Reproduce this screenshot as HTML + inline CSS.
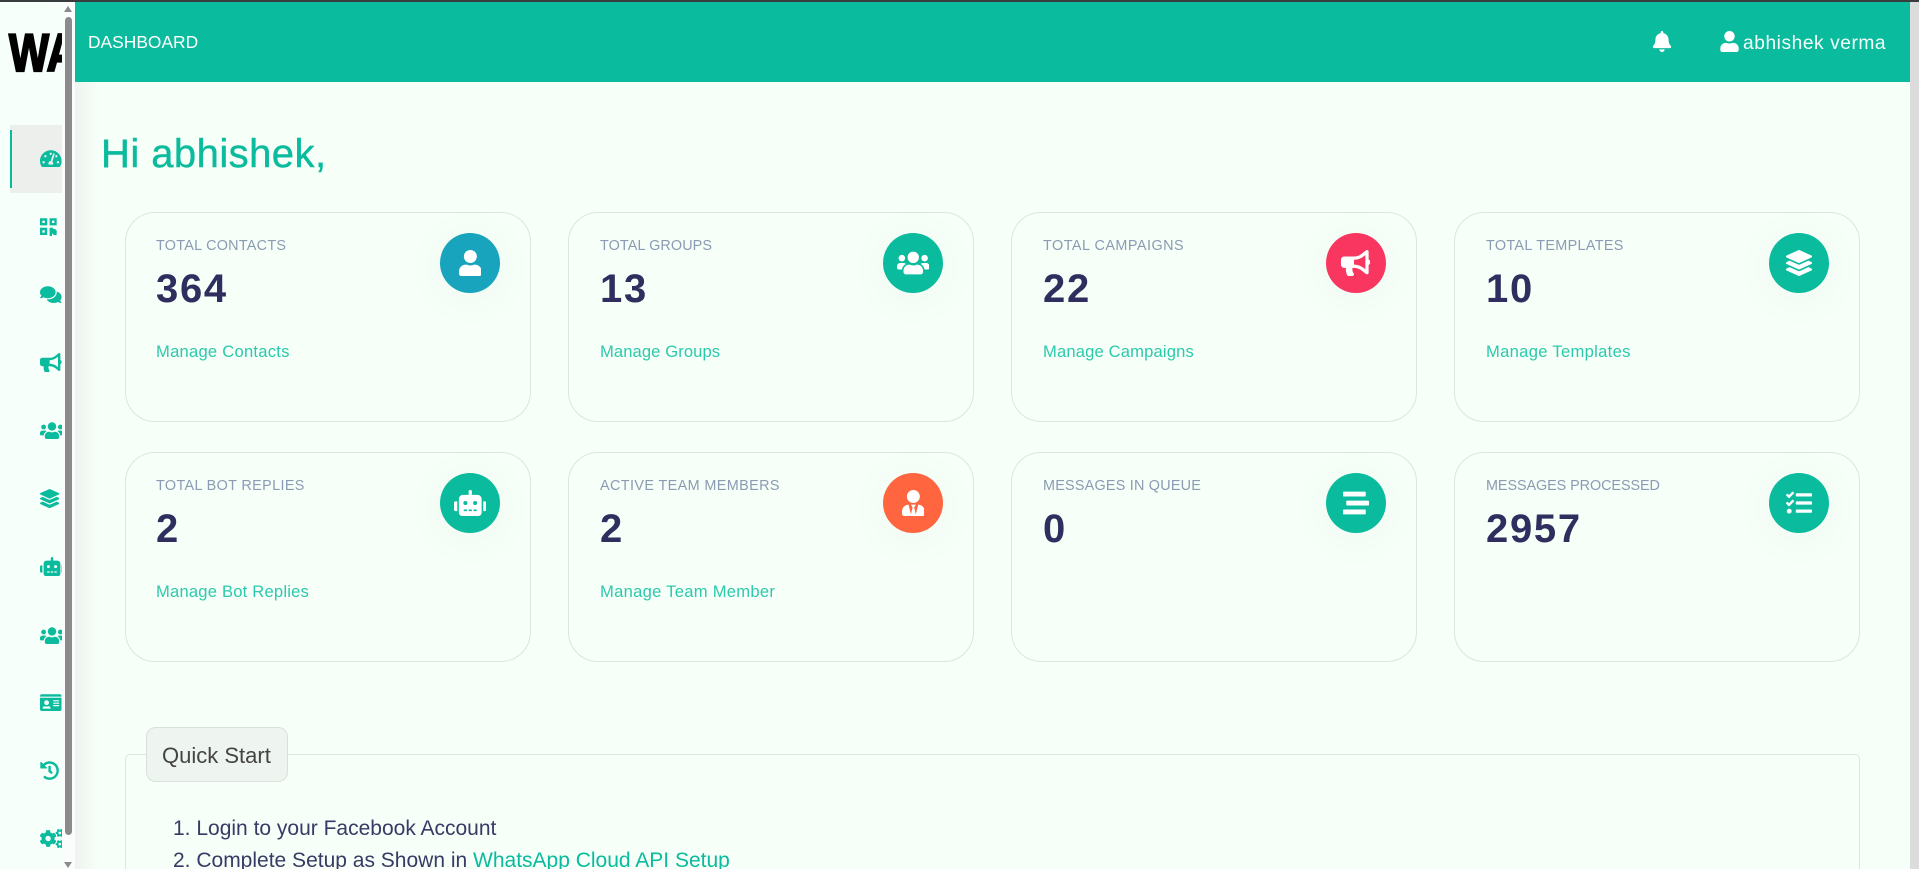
<!DOCTYPE html>
<html lang="en"><head><meta charset="utf-8"><title>Dashboard</title>
<style>
*{box-sizing:border-box;margin:0;padding:0}
html,body{width:1919px;height:869px;overflow:hidden;background:#f6fff8;font-family:"Liberation Sans",sans-serif}
#wrap{position:relative;width:1919px;height:869px;overflow:hidden;background:#f6fff8}
.a{position:absolute;white-space:nowrap;line-height:1}
#top{position:absolute;left:0;top:0;width:1919px;height:2px;background:#3a3d3d;z-index:9}
#side{position:absolute;left:0;top:0;width:75px;height:869px;background:#f6fff9}
#clip{position:absolute;left:0;top:0;width:62px;height:869px;overflow:hidden}
#logo{left:8.5px;top:27px;font-size:53px;font-weight:700;color:#000;-webkit-text-stroke:2.2px #000;transform:scaleX(.8);transform-origin:0 0}
#act{position:absolute;left:10px;top:125px;width:52px;height:68px;background:#ecefec}
#bar{position:absolute;left:10px;top:130px;width:2px;height:58px;background:#0bbb9d}
#thumb{position:absolute;left:65px;top:17px;width:7px;height:818px;background:#8b8b8b;border-radius:4px}
#track{position:absolute;left:62px;top:0;width:13px;height:869px;background:#fbfdfc}
.arr{position:absolute;left:64px;width:0;height:0;border-left:4.5px solid transparent;border-right:4.5px solid transparent}
#hdr{position:absolute;left:75px;top:2px;width:1835px;height:80px;background:#0bbb9d}
#sb{position:absolute;left:1910px;top:2px;width:9px;height:867px;background:#dcdcdc}
#grad{position:absolute;left:75px;top:82px;width:24px;height:787px;background:linear-gradient(90deg,#eff3f0,#f6fff8)}
.card{position:absolute;width:406px;height:210px;border:1px solid #dde5de;border-radius:30px;overflow:hidden;background:#f6fff8}
.card .l{position:absolute;left:31px;top:26px;font-size:14.4px;line-height:1;color:#8a9bb3;white-space:nowrap}
.card .n{position:absolute;left:31px;top:56px;font-size:40px;font-weight:700;letter-spacing:1.7px;line-height:1;color:#2f2e5f}
.card .m{position:absolute;left:31px;top:131px;font-size:16.6px;line-height:1;color:#2cc9ac;white-space:nowrap}
.card.f .l,.card.f .n,.card.f .m{left:30px}
.card .c{position:absolute;left:314px;top:20px;width:60px;height:60px;border-radius:50%;box-shadow:0 5px 50px rgba(30,60,80,.045);display:flex;align-items:center;justify-content:center}
.c svg{height:26px;fill:#fff;display:block}
.s{position:absolute;left:40px;height:19.2px;fill:#0bbb9d}
#fs{position:absolute;left:125px;top:754px;width:1735px;height:130px;border:1px solid #dde5de;border-radius:5px}
#lg{position:absolute;left:146px;top:727px;width:142px;height:55px;background:#eef5f0;border:1px solid #d9dfd9;border-radius:10px}
</style></head><body>
<div id="wrap">
<svg width="0" height="0" style="position:absolute">
<symbol id="user" viewBox="0 0 448 512"><path d="M224 256c70.7 0 128-57.3 128-128S294.7 0 224 0 96 57.3 96 128s57.3 128 128 128zm89.6 32h-16.7c-22.2 10.2-46.9 16-72.9 16s-50.6-5.8-72.9-16h-16.7C60.2 288 0 348.2 0 422.4V464c0 26.5 21.5 48 48 48h352c26.5 0 48-21.5 48-48v-41.6c0-74.2-60.2-134.4-134.4-134.4z"/></symbol>
<symbol id="bell" viewBox="0 0 448 512"><path d="M224 512c35.32 0 63.97-28.65 63.97-64H160.03c0 35.35 28.65 64 63.97 64zm215.39-149.71c-19.32-20.76-55.47-51.99-55.47-154.29 0-77.7-54.48-139.9-127.94-155.16V32c0-17.67-14.32-32-31.98-32s-31.98 14.33-31.98 32v20.84C118.56 68.1 64.08 130.3 64.08 208c0 102.3-36.15 133.53-55.47 154.29-6 6.45-8.66 14.16-8.61 21.71.11 16.4 12.98 32 32.1 32h383.8c19.12 0 32-15.6 32.1-32 .05-7.55-2.61-15.27-8.61-21.71z"/></symbol>
<symbol id="users" viewBox="0 0 640 512"><path d="M96 224c35.3 0 64-28.7 64-64s-28.7-64-64-64-64 28.7-64 64 28.7 64 64 64zm448 0c35.3 0 64-28.7 64-64s-28.7-64-64-64-64 28.7-64 64 28.7 64 64 64zm32 32h-64c-17.6 0-33.5 7.1-45.1 18.6 40.3 22.1 68.9 62 75.1 109.4h66c17.7 0 32-14.3 32-32v-32c0-35.3-28.7-64-64-64zm-256 0c61.9 0 112-50.1 112-112S381.9 32 320 32 208 82.1 208 144s50.1 112 112 112zm76.8 32h-8.3c-20.8 10-43.9 16-68.5 16s-47.6-6-68.5-16h-8.3C179.6 288 128 339.6 128 403.2V432c0 26.5 21.5 48 48 48h288c26.5 0 48-21.5 48-48v-28.8c0-63.6-51.6-115.2-115.2-115.2zm-223.7-13.4C161.5 263.1 145.6 256 128 256H64c-35.3 0-64 28.7-64 64v32c0 17.7 14.3 32 32 32h65.9c6.3-47.4 34.9-87.3 75.2-109.4z"/></symbol>
<symbol id="horn" viewBox="0 0 576 512"><path d="M576 240c0-23.63-12.95-44.04-32-55.12V32.01C544 23.26 537.02 0 512 0c-7.12 0-14.19 2.38-19.98 7.02l-85.03 68.03C364.28 109.19 310.66 128 256 128H64c-35.35 0-64 28.65-64 64v96c0 35.35 28.65 64 64 64h33.7c-1.39 10.48-2.18 21.14-2.18 32 0 39.77 9.26 77.35 25.56 110.94 5.19 10.69 16.52 17.06 28.4 17.06h74.28c26.05 0 41.69-29.84 25.9-50.56-16.4-21.52-26.15-48.36-26.15-77.44 0-11.11 1.62-21.79 4.41-32H256c54.66 0 108.28 18.81 150.98 52.95l85.03 68.03a32.023 32.023 0 0 0 19.98 7.02c24.92 0 32-22.78 32-32V295.13C563.05 284.04 576 263.63 576 240zm-96 141.42l-33.05-26.44C392.95 311.78 325.12 288 256 288v-96c69.12 0 136.95-23.78 190.95-66.98L480 98.58v282.84z"/></symbol>
<symbol id="layer" viewBox="0 0 512 512"><path d="M12.41 148.02l232.94 105.67c6.8 3.09 14.49 3.09 21.29 0l232.94-105.67c16.55-7.51 16.55-32.52 0-40.03L266.65 2.31a25.607 25.607 0 0 0-21.29 0L12.41 107.98c-16.55 7.51-16.55 32.53 0 40.04zm487.18 88.28l-58.09-26.33-161.64 73.27c-7.56 3.43-15.59 5.17-23.86 5.17s-16.29-1.74-23.86-5.17L70.51 209.97l-58.1 26.33c-16.55 7.5-16.55 32.5 0 40l232.94 105.59c6.8 3.08 14.49 3.08 21.29 0L499.59 276.3c16.55-7.5 16.55-32.5 0-40zm0 127.8l-57.87-26.23-161.86 73.37c-7.56 3.43-15.59 5.17-23.86 5.17s-16.29-1.74-23.86-5.17L70.29 337.87 12.41 364.1c-16.55 7.5-16.55 32.5 0 40l232.94 105.59c6.8 3.08 14.49 3.08 21.29 0L499.59 404.1c16.55-7.5 16.55-32.5 0-40z"/></symbol>
<symbol id="robot" viewBox="0 0 640 512"><path d="M32,224H64V416H32A31.96166,31.96166,0,0,1,0,384V256A31.96166,31.96166,0,0,1,32,224Zm512-48V448a64.06328,64.06328,0,0,1-64,64H160a64.06328,64.06328,0,0,1-64-64V176a79.974,79.974,0,0,1,80-80H288V32a32,32,0,0,1,64,0V96H464A79.974,79.974,0,0,1,544,176ZM264,256a40,40,0,1,0-40,40A39.997,39.997,0,0,0,264,256Zm-8,128H192v32h64Zm96,0H288v32h64ZM456,256a40,40,0,1,0-40,40A39.997,39.997,0,0,0,456,256Zm-8,128H384v32h64ZM640,256V384a31.96166,31.96166,0,0,1-32,32H576V224h32A31.96166,31.96166,0,0,1,640,256Z"/></symbol>
<symbol id="tach" viewBox="0 0 576 512"><path d="M288 32C128.94 32 0 160.94 0 320c0 52.8 14.25 102.26 39.06 144.8 5.61 9.62 16.3 15.2 27.44 15.2h443c11.14 0 21.83-5.58 27.44-15.2C561.75 422.26 576 372.8 576 320c0-159.06-128.94-288-288-288zm0 64c14.71 0 26.58 10.13 30.32 23.65-1.11 2.26-2.64 4.23-3.45 6.67l-9.22 27.67c-5.13 3.49-10.97 6.01-17.64 6.01-17.67 0-32-14.33-32-32S270.33 96 288 96zM96 384c-17.67 0-32-14.33-32-32s14.33-32 32-32 32 14.33 32 32-14.33 32-32 32zm48-160c-17.67 0-32-14.33-32-32s14.33-32 32-32 32 14.33 32 32-14.33 32-32 32zm246.77-72.41l-61.33 184C343.13 347.33 352 364.54 352 384c0 11.72-3.38 22.55-8.88 32H232.88c-5.5-9.45-8.88-20.28-8.88-32 0-33.94 26.5-61.43 59.9-63.59l61.34-184.01c4.17-12.56 17.73-19.45 30.36-15.17 12.57 4.19 19.35 17.77 15.17 30.36zm14.66 57.2l15.52-46.55c3.47-1.29 7.13-2.23 11.05-2.23 17.67 0 32 14.33 32 32s-14.33 32-32 32c-11.38-.01-20.89-6.28-26.57-15.22zM480 384c-17.67 0-32-14.33-32-32s14.33-32 32-32 32 14.33 32 32-14.33 32-32 32z"/></symbol>
<symbol id="hist" viewBox="0 0 512 512"><path d="M504 255.531c.253 136.64-111.18 248.372-247.82 248.468-59.015.042-113.223-20.53-155.822-54.911-11.077-8.94-11.905-25.541-1.839-35.607l11.267-11.267c8.609-8.609 22.353-9.551 31.891-1.984C173.062 425.135 212.781 440 256 440c101.705 0 184-82.311 184-184 0-101.705-82.311-184-184-184-48.814 0-93.149 18.969-126.068 49.932l50.754 50.754c10.08 10.08 2.941 27.314-11.313 27.314H24c-8.837 0-16-7.163-16-16V38.627c0-14.254 17.234-21.393 27.314-11.314l49.372 49.372C129.209 34.136 189.552 8 256 8c136.81 0 247.747 110.78 248 247.531zm-180.912 78.784l9.823-12.63c8.138-10.463 6.253-25.542-4.21-33.679L288 256.349V152c0-13.255-10.745-24-24-24h-16c-13.255 0-24 10.745-24 24v135.651l65.409 50.874c10.463 8.137 25.541 6.253 33.679-4.21z"/></symbol>
<symbol id="stream" viewBox="0 0 512 512"><path d="M16 128h416c8.84 0 16-7.16 16-16V48c0-8.84-7.16-16-16-16H16C7.16 32 0 39.16 0 48v64c0 8.84 7.16 16 16 16zm480 80H80c-8.84 0-16 7.16-16 16v64c0 8.84 7.16 16 16 16h416c8.84 0 16-7.16 16-16v-64c0-8.84-7.16-16-16-16zm-64 176H16c-8.84 0-16 7.16-16 16v64c0 8.84 7.16 16 16 16h416c8.84 0 16-7.16 16-16v-64c0-8.84-7.16-16-16-16z"/></symbol>
<symbol id="tasks" viewBox="0 0 512 512"><path d="M139.61 35.5a12 12 0 0 0-17 0L58.93 98.81l-22.7-22.12a12 12 0 0 0-17 0L3.53 92.41a12 12 0 0 0 0 17l47.59 47.4a12.78 12.78 0 0 0 17.61 0l15.59-15.62L156.52 69a12.09 12.09 0 0 0 .09-17zm0 159.19a12 12 0 0 0-17 0l-63.68 63.72-22.7-22.1a12 12 0 0 0-17 0L3.53 252a12 12 0 0 0 0 17L51 316.5a12.77 12.77 0 0 0 17.6 0l15.7-15.69 72.2-72.22a12 12 0 0 0 .09-16.9zM64 368c-26.49 0-48.59 21.5-48.59 48S37.53 464 64 464a48 48 0 0 0 0-96zm432 16H208a16 16 0 0 0-16 16v32a16 16 0 0 0 16 16h288a16 16 0 0 0 16-16v-32a16 16 0 0 0-16-16zm0-320H208a16 16 0 0 0-16 16v32a16 16 0 0 0 16 16h288a16 16 0 0 0 16-16V80a16 16 0 0 0-16-16zm0 160H208a16 16 0 0 0-16 16v32a16 16 0 0 0 16 16h288a16 16 0 0 0 16-16v-32a16 16 0 0 0-16-16z"/></symbol>
<symbol id="tie" viewBox="0 0 448 512"><path d="M224 256c70.7 0 128-57.3 128-128S294.7 0 224 0 96 57.3 96 128s57.3 128 128 128zm95.8 32.6L272 480l-32-136 32-56h-96l32 56-32 136-47.8-191.4C56.9 292 0 350.3 0 422.4V464c0 26.5 21.5 48 48 48h352c26.5 0 48-21.5 48-48v-41.6c0-72.1-56.9-130.4-128.2-133.8z"/></symbol>
<symbol id="comm" viewBox="0 0 576 512"><path d="M416 192c0-88.4-93.1-160-208-160S0 103.6 0 192c0 34.3 14.1 65.9 38 92-13.4 30.2-35.5 54.2-35.8 54.5-2.2 2.3-2.8 5.7-1.5 8.7S4.8 352 8 352c36.6 0 66.9-12.3 88.7-25 32.2 15.7 70.3 25 111.3 25 114.9 0 208-71.6 208-160zm122 220c23.9-26 38-57.7 38-92 0-66.9-53.5-124.2-129.3-148.1.9 6.6 1.3 13.3 1.3 20.1 0 105.9-107.7 192-240 192-10.8 0-21.3-.8-31.7-1.9C207.8 439.6 281.8 480 368 480c41 0 79.1-9.2 111.3-25 21.8 12.7 52.1 25 88.7 25 3.2 0 6.1-1.9 7.3-4.8 1.3-2.9.7-6.3-1.5-8.7-.3-.3-22.4-24.2-35.8-54.5z"/></symbol>
<symbol id="qr" viewBox="0 0 448 512"><path d="M0 224h192V32H0v192zM64 96h64v64H64V96zm192-64v192h192V32H256zm128 128h-64V96h64v64zM0 480h192V288H0v192zm64-128h64v64H64v-64zm352 0h32v128h-96v-32h-32v96h-64V288h96v32h64v-32zm0 160h32v32h-32v-32zm-64 0h32v32h-32v-32z"/></symbol>
<symbol id="idc" viewBox="0 0 576 512"><path d="M528 32H48C21.5 32 0 53.5 0 80v16h576V80c0-26.5-21.5-48-48-48zM0 432c0 26.5 21.5 48 48 48h480c26.5 0 48-21.5 48-48V128H0v304zm352-232c0-4.4 3.6-8 8-8h144c4.4 0 8 3.6 8 8v16c0 4.4-3.6 8-8 8H360c-4.4 0-8-3.6-8-8v-16zm0 64c0-4.4 3.6-8 8-8h144c4.4 0 8 3.6 8 8v16c0 4.4-3.6 8-8 8H360c-4.4 0-8-3.6-8-8v-16zm0 64c0-4.4 3.6-8 8-8h144c4.4 0 8 3.6 8 8v16c0 4.4-3.6 8-8 8H360c-4.4 0-8-3.6-8-8v-16zM176 192c35.3 0 64 28.7 64 64s-28.7 64-64 64-64-28.7-64-64 28.7-64 64-64zM67.1 396.2C75.5 370.5 99.6 352 128 352h8.2c12.3 5.1 25.7 8 39.8 8s27.6-2.9 39.8-8h8.2c28.4 0 52.5 18.5 60.9 44.2 3.2 9.9-5.2 19.8-15.6 19.8H82.7c-10.4 0-18.8-10-15.6-19.8z"/></symbol>
<symbol id="cogs" viewBox="0 0 640 512"><path d="M512.1 191l-8.2 14.3c-3 5.3-9.4 7.5-15.1 5.4-11.8-4.4-22.6-10.7-32.1-18.6-4.6-3.8-5.8-10.5-2.8-15.7l8.2-14.3c-6.9-8-12.3-17.3-15.9-27.4h-16.5c-6 0-11.2-4.3-12.2-10.3-2-12-2.1-24.6 0-37.1 1-6 6.2-10.4 12.2-10.4h16.5c3.6-10.1 9-19.4 15.9-27.4l-8.2-14.3c-3-5.2-1.9-11.9 2.8-15.7 9.5-7.9 20.4-14.2 32.1-18.6 5.7-2.1 12.1.1 15.1 5.4l8.2 14.3c10.5-1.9 21.2-1.9 31.7 0L552 6.3c3-5.3 9.4-7.5 15.1-5.4 11.8 4.4 22.6 10.7 32.1 18.6 4.6 3.8 5.8 10.5 2.8 15.7l-8.2 14.3c6.9 8 12.3 17.3 15.9 27.4h16.5c6 0 11.2 4.3 12.2 10.3 2 12 2.1 24.6 0 37.1-1 6-6.2 10.4-12.2 10.4h-16.5c-3.6 10.1-9 19.4-15.9 27.4l8.2 14.3c3 5.2 1.9 11.9-2.8 15.7-9.5 7.9-20.4 14.2-32.1 18.6-5.7 2.1-12.1-.1-15.1-5.4l-8.2-14.3c-10.4 1.9-21.2 1.9-31.7 0zm-10.5-58.8c38.5 29.6 82.4-14.3 52.8-52.8-38.5-29.7-82.4 14.3-52.8 52.8zM386.3 286.1l33.7 16.8c10.1 5.8 14.5 18.1 10.5 29.1-8.9 24.2-26.4 46.4-42.6 65.8-7.4 8.9-20.2 11.1-30.3 5.3l-29.1-16.8c-16 13.7-34.6 24.6-54.9 31.7v33.6c0 11.6-8.3 21.6-19.7 23.6-24.6 4.2-50.4 4.4-75.9 0-11.5-2-20-11.9-20-23.6V418c-20.3-7.2-38.9-18-54.9-31.7L74 403c-10 5.8-22.9 3.6-30.3-5.3-16.2-19.4-33.3-41.6-42.2-65.7-4-10.9.4-23.2 10.5-29.1l33.3-16.8c-3.9-20.9-3.9-42.4 0-63.4L12 205.8c-10.1-5.8-14.6-18.1-10.5-29 8.9-24.2 26-46.4 42.2-65.8 7.4-8.9 20.2-11.1 30.3-5.3l29.1 16.8c16-13.7 34.6-24.6 54.9-31.7V57.1c0-11.5 8.2-21.5 19.6-23.5 24.6-4.2 50.5-4.4 76-.1 11.5 2 20 11.9 20 23.6v33.6c20.3 7.2 38.9 18 54.9 31.7l29.1-16.8c10-5.8 22.9-3.6 30.3 5.3 16.2 19.4 33.2 41.6 42.1 65.8 4 10.9.1 23.2-10 29.1l-33.7 16.8c3.9 21 3.9 42.5 0 63.5zm-117.6 21.1c59.2-77-28.7-164.9-105.7-105.7-59.2 77 28.7 164.9 105.7 105.7zm243.4 182.7l-8.2 14.3c-3 5.3-9.4 7.5-15.1 5.4-11.8-4.4-22.6-10.7-32.1-18.6-4.6-3.8-5.8-10.5-2.8-15.7l8.2-14.3c-6.9-8-12.3-17.3-15.9-27.4h-16.5c-6 0-11.2-4.3-12.2-10.3-2-12-2.1-24.6 0-37.1 1-6 6.2-10.4 12.2-10.4h16.5c3.6-10.1 9-19.4 15.9-27.4l-8.2-14.3c-3-5.2-1.9-11.9 2.8-15.7 9.5-7.9 20.4-14.2 32.1-18.6 5.7-2.1 12.1.1 15.1 5.4l8.2 14.3c10.5-1.9 21.2-1.9 31.7 0l8.2-14.3c3-5.3 9.4-7.5 15.1-5.4 11.8 4.4 22.6 10.7 32.1 18.6 4.6 3.8 5.8 10.5 2.8 15.7l-8.2 14.3c6.9 8 12.3 17.3 15.9 27.4h16.5c6 0 11.2 4.3 12.2 10.3 2 12 2.1 24.6 0 37.1-1 6-6.2 10.4-12.2 10.4h-16.5c-3.6 10.1-9 19.4-15.9 27.4l8.2 14.3c3 5.2 1.9 11.9-2.8 15.7-9.5 7.9-20.4 14.2-32.1 18.6-5.7 2.1-12.1-.1-15.1-5.4l-8.2-14.3c-10.4 1.9-21.2 1.9-31.7 0zM501.6 431c38.5 29.6 82.4-14.3 52.8-52.8-38.5-29.6-82.4 14.3-52.8 52.8z"/></symbol>
</svg>
<div id="top"></div>
<div id="side">
<div id="track"></div>
<div id="clip">
<div id="logo" class="a">WA</div>
<div id="act"></div><div id="bar"></div>
<svg class="s" style="top:149px;width:21.6px"><use href="#tach"/></svg>
<svg class="s" style="top:217px;width:16.8px"><use href="#qr"/></svg>
<svg class="s" style="top:285px;width:21.6px"><use href="#comm"/></svg>
<svg class="s" style="top:353px;width:21.6px"><use href="#horn"/></svg>
<svg class="s" style="top:421px;width:24px"><use href="#users"/></svg>
<svg class="s" style="top:489px;width:19.2px"><use href="#layer"/></svg>
<svg class="s" style="top:557px;width:24px"><use href="#robot"/></svg>
<svg class="s" style="top:626px;width:24px"><use href="#users"/></svg>
<svg class="s" style="top:693px;width:21.6px"><use href="#idc"/></svg>
<svg class="s" style="top:761px;width:19.2px"><use href="#hist"/></svg>
<svg class="s" style="top:829px;width:24px"><use href="#cogs"/></svg>
</div>
<div id="thumb"></div>
<div class="arr" style="top:6px;border-bottom:6px solid #8b8b8b"></div>
<div class="arr" style="top:862px;border-top:6px solid #8b8b8b"></div>
</div>
<div id="sb"></div>
<div id="hdr"></div>
<div id="grad"></div>
<div class="a" style="left:88px;top:34.4px;font-size:17.4px;color:#fff">DASHBOARD</div>
<svg class="a" style="left:1652px;top:31px;width:20px;height:21px;fill:#fff"><use href="#bell"/></svg>
<svg class="a" style="left:1720px;top:31px;width:19px;height:21px;fill:#fff"><use href="#user"/></svg>
<div class="a" style="left:1743px;top:34px;font-size:19.2px;color:#f4fffb;letter-spacing:.55px">abhishek verma</div>
<div class="a" style="left:101px;top:134px;font-size:40px;color:#0bbb9d;letter-spacing:.45px;-webkit-text-stroke:.4px #0bbb9d">Hi abhishek,</div>

<div class="card f" style="left:125px;top:212px"><div class="l" style="letter-spacing:.26px">TOTAL CONTACTS</div><div class="n">364</div><div class="m" style="letter-spacing:.24px">Manage Contacts</div><div class="c" style="background:#18a4bc"><svg viewBox="0 0 448 512"><use href="#user"/></svg></div></div>
<div class="card" style="left:568px;top:212px"><div class="l" style="letter-spacing:.1px">TOTAL GROUPS</div><div class="n">13</div><div class="m" style="letter-spacing:.09px">Manage Groups</div><div class="c" style="background:#0bbb9d"><svg viewBox="0 0 640 512"><use href="#users"/></svg></div></div>
<div class="card" style="left:1011px;top:212px"><div class="l" style="letter-spacing:.49px">TOTAL CAMPAIGNS</div><div class="n">22</div><div class="m" style="letter-spacing:.15px">Manage Campaigns</div><div class="c" style="background:#f8365f"><svg viewBox="0 0 576 512"><use href="#horn"/></svg></div></div>
<div class="card" style="left:1454px;top:212px"><div class="l" style="letter-spacing:.33px">TOTAL TEMPLATES</div><div class="n">10</div><div class="m" style="letter-spacing:.3px">Manage Templates</div><div class="c" style="background:#0bbb9d"><svg viewBox="0 0 512 512"><use href="#layer"/></svg></div></div>
<div class="card f" style="left:125px;top:452px"><div class="l" style="letter-spacing:.36px">TOTAL BOT REPLIES</div><div class="n">2</div><div class="m" style="letter-spacing:.2px">Manage Bot Replies</div><div class="c" style="background:#0bbb9d"><svg viewBox="0 0 640 512"><use href="#robot"/></svg></div></div>
<div class="card" style="left:568px;top:452px"><div class="l" style="letter-spacing:.39px">ACTIVE TEAM MEMBERS</div><div class="n">2</div><div class="m" style="letter-spacing:.27px">Manage Team Member</div><div class="c" style="background:#ff6640"><svg viewBox="0 0 448 512"><use href="#tie"/></svg></div></div>
<div class="card" style="left:1011px;top:452px"><div class="l" style="letter-spacing:.22px">MESSAGES IN QUEUE</div><div class="n">0</div><div class="c" style="background:#0bbb9d"><svg viewBox="0 0 512 512"><use href="#stream"/></svg></div></div>
<div class="card" style="left:1454px;top:452px"><div class="l" style="letter-spacing:-.07px">MESSAGES PROCESSED</div><div class="n">2957</div><div class="c" style="background:#0bbb9d"><svg viewBox="0 0 512 512"><use href="#tasks"/></svg></div></div>

<div id="fs"></div>
<div id="lg"></div>
<div class="a" style="left:162px;top:745px;font-size:22px;color:#444">Quick Start</div>
<div class="a" style="left:173px;top:818px;font-size:21px;color:#3a3a66">1. Login to your Facebook Account</div>
<div class="a" style="left:173px;top:850px;font-size:21px;color:#3a3a66">2. Complete Setup as Shown in <span style="color:#0bbb9d">WhatsApp Cloud API Setup</span></div>
</div>
</body></html>
